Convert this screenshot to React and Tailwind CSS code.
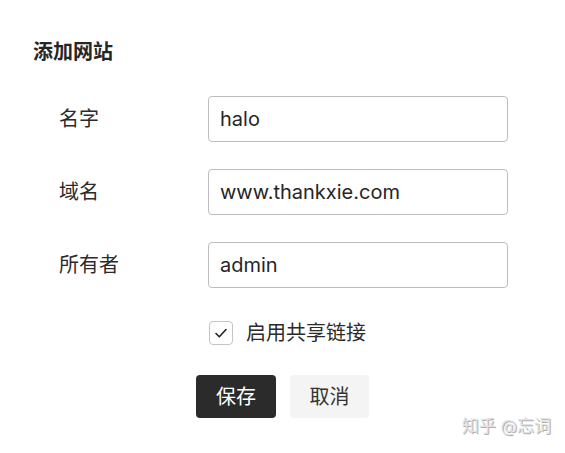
import React, { useState } from 'react';

const font = { fontFamily: 'Inter, "Noto Sans CJK SC", sans-serif' };

function Field({ label, value, onChange }) {
    return (
        <div className="flex items-center h-[46px]">
            <label className="w-[175px] pl-[26px] text-[20px] text-[#2b2b2b]">{label}</label>
            <input
                type="text"
                value={value}
                onChange={(e) => onChange(e.target.value)}
                className="w-[300px] h-[46px] px-[11px] text-[20px] text-[#262626] bg-white border border-[#bdbdbd] rounded-[4px] outline-none"
            />
        </div>
    );
}

export default function App() {
    const [name, setName] = useState('halo');
    const [domain, setDomain] = useState('www.thankxie.com');
    const [owner, setOwner] = useState('admin');
    const [shared, setShared] = useState(true);

    return (
        <div className="relative w-[565px] h-[453px] bg-white overflow-hidden" style={font}>
            <div className="pl-[33px] pt-[38px]">
                <h2 className="text-[20px] font-bold text-[#262626] leading-[28px]">添加网站</h2>

                <div className="mt-[30px] flex flex-col gap-[27px]">
                    <Field label="名字" value={name} onChange={setName} />
                    <Field label="域名" value={domain} onChange={setDomain} />
                    <Field label="所有者" value={owner} onChange={setOwner} />
                </div>

                <label className="mt-[30px] ml-[176px] flex items-center gap-[13px] cursor-pointer">
                    <span
                        onClick={() => setShared(!shared)}
                        className="w-[24px] h-[24px] border border-[#c4c4c4] rounded-[4px] flex items-center justify-center bg-white"
                    >
                        {shared && (
                            <svg width="16" height="16" viewBox="0 0 16 16" fill="none">
                                <path d="M3 8.5l3.3 3.3L13 4.5" stroke="#222" strokeWidth="1.6" strokeLinecap="round" strokeLinejoin="round" />
                            </svg>
                        )}
                    </span>
                    <span className="text-[20px] text-[#2b2b2b]">启用共享链接</span>
                </label>

                <div className="mt-[27px] ml-[163px] flex gap-[14px]">
                    <button className="w-[80px] h-[43px] rounded-[4px] bg-[#2b2b2b] text-white text-[20px]">保存</button>
                    <button className="w-[79px] h-[43px] rounded-[4px] bg-[#f4f4f4] text-[#333] text-[20px]">取消</button>
                </div>
            </div>

            <div className="absolute right-[14px] bottom-[14px] text-[17px] text-[#e2e2e2]" style={{ textShadow: '1px 1px 0 #b0b0b0' }}>
                知乎 @忘词
            </div>
        </div>
    );
}
